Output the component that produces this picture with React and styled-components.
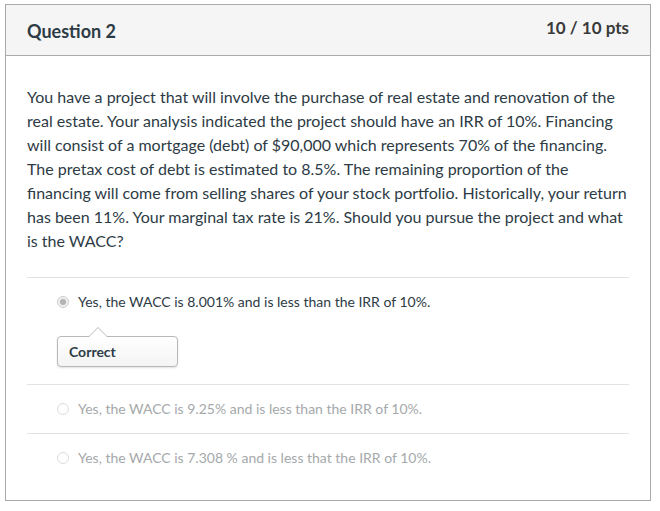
import React from "react";
import styled, { createGlobalStyle } from "styled-components";

const GlobalStyle = createGlobalStyle`
  html, body {
    margin: 0;
    padding: 0;
    background: #fff;
  }
  body {
    font-family: Lato, "Open Sans", "Liberation Sans", sans-serif;
    color: #2d3b45;
  }
`;

const Page = styled.div`
  padding: 4px 9px 0 5px;
`;

const Card = styled.div`
  border: 1px solid #aaa;
  background: #fff;
  height: 497px;
  box-sizing: border-box;
`;

const Header = styled.div`
  display: flex;
  justify-content: space-between;
  align-items: flex-start;
  height: 51px;
  box-sizing: border-box;
  padding: 0 21px;
  background: #f5f5f5;
  border-bottom: 1px solid #aaa;
`;

const Title = styled.h2`
  margin: 0;
  padding-top: 15px;
  font-size: 18px;
  line-height: 22px;
  font-weight: 700;
  color: #2d3b45;
`;

const Points = styled.div`
  padding-top: 13px;
  font-size: 17px;
  line-height: 20px;
  font-weight: 700;
  color: #3a3a3a;
`;

const Body = styled.div`
  padding: 29px 21px 0;
`;

const QuestionText = styled.p`
  margin: 0 0 24px;
  font-size: 16px;
  line-height: 24px;
  color: #2d3b45;
`;

const Answer = styled.div`
  border-top: 1px solid #e2e2e2;
  padding: 14px 0 ${(p) => (p.$tight ? 17 : 14)}px 30px;
`;

const Row = styled.label`
  display: flex;
  align-items: center;
  gap: 9px;
  font-size: 14px;
  line-height: 20px;
  color: ${(p) => (p.$muted ? "#a5a9ab" : "#2d3b45")};
`;

const Radio = styled.span`
  width: 12px;
  height: 12px;
  border-radius: 50%;
  box-sizing: border-box;
  border: 1px solid ${(p) => (p.$checked ? "#cfcfcf" : "#dcdcdc")};
  background: ${(p) => (p.$checked ? "#eee" : "#fff")};
  display: flex;
  align-items: center;
  justify-content: center;
  flex-shrink: 0;

  &::after {
    content: "";
    display: ${(p) => (p.$checked ? "block" : "none")};
    width: 6px;
    height: 6px;
    border-radius: 50%;
    background: #b3b3b3;
  }
`;

const Bubble = styled.div`
  position: relative;
  margin: 24px 0 0;
  width: 121px;
  height: 31px;
  box-sizing: border-box;
  padding: 0 11px;
  display: flex;
  align-items: center;
  border: 1px solid #b8b8b8;
  border-radius: 4px;
  background: linear-gradient(#fff, #f4f4f4);
  box-shadow: 0 1px 2px rgba(0, 0, 0, 0.12);
  font-size: 14px;
  font-weight: 700;
  color: #2d3b45;

  &::before,
  &::after {
    content: "";
    position: absolute;
    left: 30px;
    width: 0;
    height: 0;
    border-left: 10px solid transparent;
    border-right: 10px solid transparent;
  }
  &::before {
    top: -10px;
    border-bottom: 10px solid #b8b8b8;
  }
  &::after {
    top: -9px;
    border-bottom: 10px solid #fff;
  }
`;

const answers = [
  { text: "Yes, the WACC is 8.001% and is less than the IRR of 10%.", selected: true },
  { text: "Yes, the WACC is 9.25% and is less than the IRR of 10%." },
  { text: "Yes, the WACC is 7.308 % and is less that the IRR of 10%." },
];

export default function App() {
  return (
    <Page>
      <GlobalStyle />
      <Card>
        <Header>
          <Title>Question 2</Title>
          <Points>10 / 10 pts</Points>
        </Header>
        <Body>
          <QuestionText>
            You have a project that will involve the purchase of real estate and
            renovation of the real estate. Your analysis indicated the project
            should have an IRR of 10%. Financing will consist of a mortgage
            (debt) of $90,000 which represents 70% of the financing. The pretax
            cost of debt is estimated to 8.5%. The remaining proportion of the
            financing will come from selling shares of your stock portfolio.
            Historically, your return has been 11%. Your marginal tax rate is
            21%. Should you pursue the project and what is the WACC?
          </QuestionText>
          {answers.map((a) => (
            <Answer key={a.text} $tight={a.selected}>
              <Row $muted={!a.selected}>
                <Radio $checked={a.selected} />
                {a.text}
              </Row>
              {a.selected && <Bubble>Correct</Bubble>}
            </Answer>
          ))}
        </Body>
      </Card>
    </Page>
  );
}
